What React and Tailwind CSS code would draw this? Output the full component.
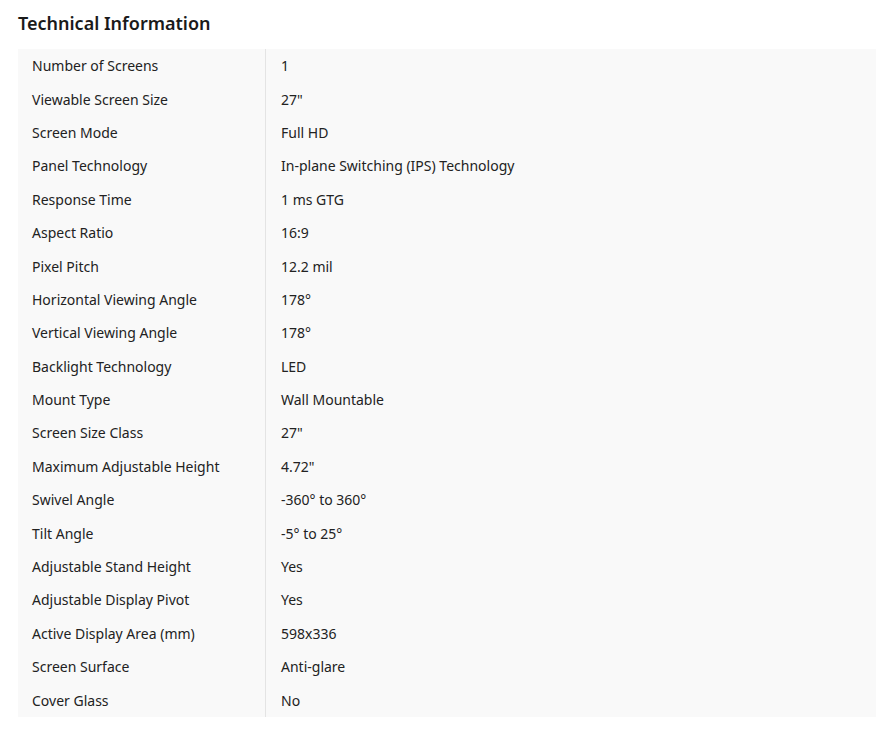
const rows = [
  ["Number of Screens", "1"],
  ["Viewable Screen Size", "27\""],
  ["Screen Mode", "Full HD"],
  ["Panel Technology", "In-plane Switching (IPS) Technology"],
  ["Response Time", "1 ms GTG"],
  ["Aspect Ratio", "16:9"],
  ["Pixel Pitch", "12.2 mil"],
  ["Horizontal Viewing Angle", "178°"],
  ["Vertical Viewing Angle", "178°"],
  ["Backlight Technology", "LED"],
  ["Mount Type", "Wall Mountable"],
  ["Screen Size Class", "27\""],
  ["Maximum Adjustable Height", "4.72\""],
  ["Swivel Angle", "-360° to 360°"],
  ["Tilt Angle", "-5° to 25°"],
  ["Adjustable Stand Height", "Yes"],
  ["Adjustable Display Pivot", "Yes"],
  ["Active Display Area (mm)", "598x336"],
  ["Screen Surface", "Anti-glare"],
  ["Cover Glass", "No"],
];

export default function App() {
  return (
    <div className="bg-white w-[876px] h-[738px] pl-[18px] font-['Noto_Sans',sans-serif] text-[#222]">
      <h2 className="pt-[10px] h-[49px] text-[18px] font-semibold text-[#1a1a1a] leading-[26px]">Technical Information</h2>
      <div className="bg-[#f9f9f9] w-[858px] flex flex-col">
        {rows.map(([k, v]) => (
          <div key={k} className="flex h-[33.4px] items-center text-[14px]">
            <div className="w-[248px] h-full flex items-center pl-[14px] border-r border-[#e4e4e4]">{k}</div>
            <div className="pl-[15px]">{v}</div>
          </div>
        ))}
      </div>
    </div>
  );
}
